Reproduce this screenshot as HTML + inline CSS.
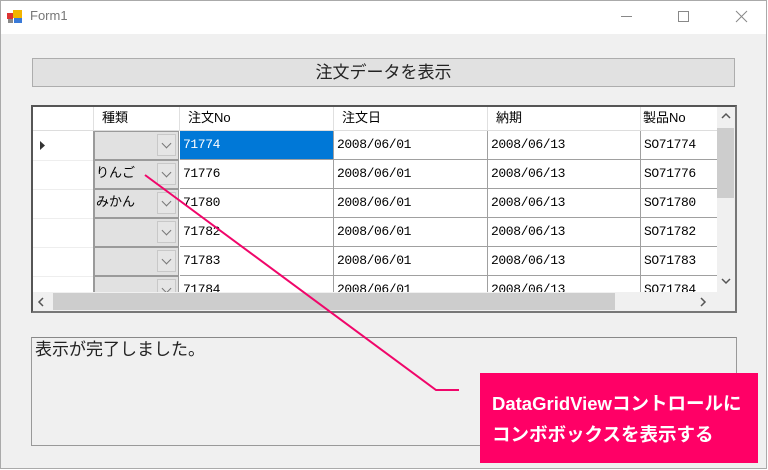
<!DOCTYPE html><html><head><meta charset="utf-8"><style>
*{margin:0;padding:0;box-sizing:border-box}
body{width:768px;height:470px;background:#fff;position:relative;overflow:hidden;font-family:"Liberation Sans","Noto Sans CJK JP",sans-serif}
.a{position:absolute}
.win{left:0;top:0;width:767px;height:469px;border:1px solid #aaa;background:#f0f0f0}
.title{left:1px;top:1px;width:765px;height:33px;background:#fff}
.cell{position:absolute;height:29px;border-right:1px solid #a0a0a0;border-bottom:1px solid #a0a0a0;background:#fff;font-size:13px;line-height:28px;padding-left:3px;color:#000;font-family:"Liberation Mono",monospace;letter-spacing:-0.4px;overflow:hidden;white-space:nowrap}
.hd{position:absolute;top:107px;height:24px;background:#fff;border-right:1px solid #e0e0e0;font-size:13px;line-height:22px;padding-left:8px}
.cb{position:absolute;width:86px;height:29px;background:#e1e1e1;border:1px solid #9a9a9a;border-left:2px solid #9a9a9a;font-size:13px;line-height:24px;padding-left:1px}
.cb i{position:absolute;right:2px;top:2px;width:19px;height:22px;border:1px solid #c8c8c8;background:#e5e5e5}
.cb i:after{content:"";position:absolute;left:5px;top:5px;width:6px;height:6px;border-right:1px solid #777;border-bottom:1px solid #777;transform:rotate(45deg)}
</style></head><body>
<div class="a win"></div>
<div class="a title"></div>
<svg class="a" style="left:7px;top:10px" width="16" height="14"><rect x="0" y="3" width="6" height="6" fill="#d33"/><rect x="6" y="0" width="9" height="8" fill="#f2b400"/><rect x="1" y="9" width="5" height="4" fill="#888"/><rect x="7" y="8" width="8" height="5" fill="#3a7ad8"/></svg>
<div class="a" style="left:30px;top:8px;font-size:13px;color:#777">Form1</div>
<div class="a" style="left:621px;top:16px;width:11px;height:1px;background:#888"></div>
<div class="a" style="left:678px;top:11px;width:11px;height:11px;border:1px solid #888"></div>
<svg class="a" style="left:735px;top:10px" width="13" height="13"><path d="M1 1L12 12M12 1L1 12" stroke="#888" stroke-width="1"/></svg>
<div class="a" style="left:32px;top:58px;width:703px;height:29px;background:#e1e1e1;border:1px solid #adadad;text-align:center;font-size:17px;line-height:27px;color:#222">注文データを表示</div>
<div class="a" style="left:31px;top:105px;width:706px;height:208px;border:2px solid #555;border-right-color:#777;border-bottom-color:#777;background:#fff;overflow:hidden">
</div>
<div class="a" style="left:33px;top:107px;width:684px;height:185px;overflow:hidden;background:#fff">
<div style="position:relative;left:-33px;top:-107px">
<div class="hd" style="left:93px;width:87px;border-left:1px solid #e0e0e0">種類</div>
<div class="hd" style="left:180px;width:154px">注文No</div>
<div class="hd" style="left:334px;width:154px">注文日</div>
<div class="hd" style="left:488px;width:153px">納期</div>
<div class="hd" style="left:641px;width:80px;padding-left:2px">製品No</div>
<div class="a" style="left:33px;top:130px;width:700px;height:1px;background:#ddd"></div>

<div class="cell" style="left:180px;top:131px;width:154px;background:#0078d7;color:#fff">71774</div>
<div class="cell" style="left:334px;top:131px;width:154px">2008/06/01</div>
<div class="cell" style="left:488px;top:131px;width:153px">2008/06/13</div>
<div class="cell" style="left:641px;top:131px;width:90px">SO71774</div>
<div class="cb" style="left:93px;top:131px"><i></i></div>

<div class="cell" style="left:180px;top:160px;width:154px">71776</div>
<div class="cell" style="left:334px;top:160px;width:154px">2008/06/01</div>
<div class="cell" style="left:488px;top:160px;width:153px">2008/06/13</div>
<div class="cell" style="left:641px;top:160px;width:90px">SO71776</div>
<div class="cb" style="left:93px;top:160px">りんご<i></i></div>

<div class="cell" style="left:180px;top:189px;width:154px">71780</div>
<div class="cell" style="left:334px;top:189px;width:154px">2008/06/01</div>
<div class="cell" style="left:488px;top:189px;width:153px">2008/06/13</div>
<div class="cell" style="left:641px;top:189px;width:90px">SO71780</div>
<div class="cb" style="left:93px;top:189px">みかん<i></i></div>

<div class="cell" style="left:180px;top:218px;width:154px">71782</div>
<div class="cell" style="left:334px;top:218px;width:154px">2008/06/01</div>
<div class="cell" style="left:488px;top:218px;width:153px">2008/06/13</div>
<div class="cell" style="left:641px;top:218px;width:90px">SO71782</div>
<div class="cb" style="left:93px;top:218px"><i></i></div>

<div class="cell" style="left:180px;top:247px;width:154px">71783</div>
<div class="cell" style="left:334px;top:247px;width:154px">2008/06/01</div>
<div class="cell" style="left:488px;top:247px;width:153px">2008/06/13</div>
<div class="cell" style="left:641px;top:247px;width:90px">SO71783</div>
<div class="cb" style="left:93px;top:247px"><i></i></div>

<div class="cell" style="left:180px;top:276px;width:154px">71784</div>
<div class="cell" style="left:334px;top:276px;width:154px">2008/06/01</div>
<div class="cell" style="left:488px;top:276px;width:153px">2008/06/13</div>
<div class="cell" style="left:641px;top:276px;width:90px">SO71784</div>
<div class="cb" style="left:93px;top:276px"><i></i></div>

<div class="a" style="left:33px;top:160px;width:60px;height:1px;background:#eee"></div>
<div class="a" style="left:33px;top:189px;width:60px;height:1px;background:#eee"></div>
<div class="a" style="left:33px;top:218px;width:60px;height:1px;background:#eee"></div>
<div class="a" style="left:33px;top:247px;width:60px;height:1px;background:#eee"></div>
<div class="a" style="left:33px;top:276px;width:60px;height:1px;background:#eee"></div>
<svg class="a" style="left:40px;top:141px" width="6" height="9"><path d="M0 0L5 4.5L0 9Z" fill="#333"/></svg>
</div></div>
<div class="a" style="left:717px;top:107px;width:18px;height:185px;background:#f0f0f0"></div>
<div class="a" style="left:717px;top:128px;width:17px;height:70px;background:#cdcdcd"></div>
<svg class="a" style="left:721px;top:112px" width="10" height="8"><path d="M1 6L5 2L9 6" stroke="#555" fill="none" stroke-width="1.5"/></svg>
<svg class="a" style="left:721px;top:277px" width="10" height="8"><path d="M1 2L5 6L9 2" stroke="#555" fill="none" stroke-width="1.5"/></svg>
<div class="a" style="left:33px;top:292px;width:702px;height:19px;background:#f0f0f0"></div>
<div class="a" style="left:53px;top:293px;width:562px;height:17px;background:#cdcdcd"></div>
<svg class="a" style="left:37px;top:297px" width="8" height="10"><path d="M6 1L2 5L6 9" stroke="#555" fill="none" stroke-width="1.5"/></svg>
<svg class="a" style="left:699px;top:297px" width="8" height="10"><path d="M2 1L6 5L2 9" stroke="#555" fill="none" stroke-width="1.5"/></svg>
<div class="a" style="left:31px;top:337px;width:706px;height:109px;border:1px solid #999;border-top-color:#888;background:#f0f0f0;font-size:17px;line-height:24px;padding-left:3px;color:#222">表示が完了しました。</div>
<svg class="a" style="left:0;top:0" width="768" height="470"><path d="M145 175L436 390L459 390" stroke="#f0066a" stroke-width="2" fill="none"/></svg>
<div class="a" style="left:480px;top:373px;width:278px;height:90px;background:#ff0066;color:#fff;font-weight:bold;font-size:18.5px;line-height:31px;padding:15px 0 0 12px;white-space:nowrap">DataGridViewコントロールに<br>コンボボックスを表示する</div>
</body></html>
